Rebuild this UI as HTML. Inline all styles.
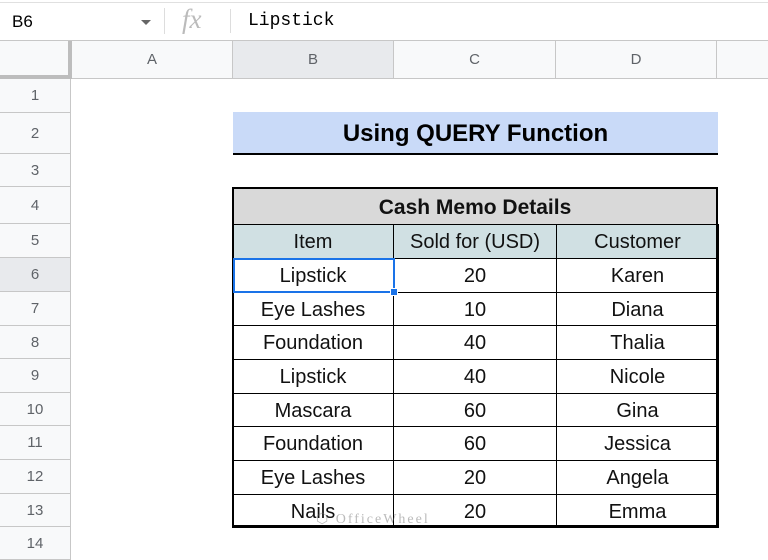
<!DOCTYPE html>
<html><head><style>
*{margin:0;padding:0;box-sizing:border-box}
body{width:768px;height:560px;overflow:hidden;background:#fff;font-family:"Liberation Sans",Arial,sans-serif;position:relative}
.a{position:absolute}
.ch{position:absolute;top:41px;height:38px;background:#f8f9fa;border-right:1px solid #c7c7c7;border-bottom:1px solid #c7c7c7;color:#5f6368;font-size:15px;text-align:center;line-height:38px}
.rh{position:absolute;left:0;width:71px;background:#f8f9fa;border-bottom:1px solid #c7c7c7;border-right:1px solid #c7c7c7;color:#5f6368;font-size:15px;text-align:center}
.c{position:absolute;text-align:center;font-size:20px;color:#111;border:1px solid #000}
</style></head><body>
<div class="a" style="top:0;left:0;width:768px;height:3px;border-bottom:1px solid #e0e0e0"></div>
<div class="a" style="left:12px;top:12px;font-size:17px;color:#000">B6</div>
<div class="a" style="left:141px;top:20px;width:0;height:0;border-left:5px solid transparent;border-right:5px solid transparent;border-top:5px solid #666"></div>
<div class="a" style="left:164px;top:8px;width:1px;height:26px;background:#ddd"></div>
<div class="a" style="left:182px;top:4px;font-family:'Liberation Serif',serif;font-style:italic;font-size:27px;color:#bbb">fx</div>
<div class="a" style="left:230px;top:9px;width:1px;height:24px;background:#ddd"></div>
<div class="a" style="left:248px;top:11px;font-family:'Liberation Mono',monospace;font-size:18px;color:#000">Lipstick</div>
<div class="a" style="top:40px;left:0;width:768px;height:1px;background:#c7c7c7"></div>
<div class="a" style="left:0;top:41px;width:72px;height:38px;background:#f8f9fa;border-right:4px solid #bdbdbd;border-bottom:4px solid #bdbdbd"></div>
<div class="ch" style="left:72px;width:161px">A</div>
<div class="ch" style="left:233px;width:161px;background:#e8eaed">B</div>
<div class="ch" style="left:394px;width:162px">C</div>
<div class="ch" style="left:556px;width:161px">D</div>
<div class="ch" style="left:717px;width:60px"></div>
<div class="rh" style="top:79px;height:34px;line-height:34px">1</div>
<div class="rh" style="top:113px;height:41px;line-height:41px">2</div>
<div class="rh" style="top:154px;height:33px;line-height:33px">3</div>
<div class="rh" style="top:187px;height:37px;line-height:37px">4</div>
<div class="rh" style="top:224px;height:34px;line-height:34px">5</div>
<div class="rh" style="top:258px;height:34px;line-height:34px;background:#e8eaed">6</div>
<div class="rh" style="top:292px;height:34px;line-height:34px">7</div>
<div class="rh" style="top:326px;height:33px;line-height:33px">8</div>
<div class="rh" style="top:359px;height:34px;line-height:34px">9</div>
<div class="rh" style="top:393px;height:33px;line-height:33px">10</div>
<div class="rh" style="top:426px;height:34px;line-height:34px">11</div>
<div class="rh" style="top:460px;height:34px;line-height:34px">12</div>
<div class="rh" style="top:494px;height:33px;line-height:33px">13</div>
<div class="rh" style="top:527px;height:33px;line-height:33px">14</div>

<div class="a" style="left:233px;top:112px;width:485px;height:43px;background:#c9daf8;border-bottom:2px solid #000;text-align:center;font-weight:bold;font-size:24px;line-height:44px">Using QUERY Function</div>

<div class="c" style="left:232px;top:187px;width:486px;height:38px;background:#d9d9d9;font-weight:bold;font-size:21px;line-height:37px;border-width:2px 2px 1px 2px">Cash Memo Details</div>
<div id="t"></div>
<script>
var rows=[["Item","Sold for (USD)","Customer"],["Lipstick","20","Karen"],["Eye Lashes","10","Diana"],["Foundation","40","Thalia"],["Lipstick","40","Nicole"],["Mascara","60","Gina"],["Foundation","60","Jessica"],["Eye Lashes","20","Angela"],["Nails","20","Emma"]];
var ys=[224,258,292,325,359,393,426,460,494,527];
var xs=[232,393,556,718];
var h="";
for(var r=0;r<rows.length;r++){for(var c=0;c<3;c++){
var bg=r==0?"#d0e0e3":"#fff";
h+='<div class="c" style="left:'+xs[c]+'px;top:'+ys[r]+'px;width:'+(xs[c+1]-xs[c]+1)+'px;height:'+(ys[r+1]-ys[r]+1)+'px;line-height:'+(ys[r+1]-ys[r]+1)+'px;background:'+bg+'">'+rows[r][c]+'</div>';}}
document.getElementById("t").outerHTML=h;
</script>
<div class="a" style="left:232px;top:525px;width:486px;height:3px;background:#000"></div>
<div class="a" style="left:716px;top:187px;width:2px;height:340px;background:#000"></div>
<div class="a" style="left:232px;top:187px;width:2px;height:340px;background:#000"></div>
<div class="a" style="left:233px;top:258px;width:162px;height:35px;border:2px solid #1a73e8"></div>
<div class="a" style="left:390px;top:288px;width:8px;height:8px;background:#1a73e8;border:1px solid #fff"></div>
<div class="a" style="left:316px;top:511px;font-family:'Liberation Serif',serif;font-size:14px;letter-spacing:2px;color:rgba(120,120,120,0.5)">⬡ OfficeWheel</div>
</body></html>
